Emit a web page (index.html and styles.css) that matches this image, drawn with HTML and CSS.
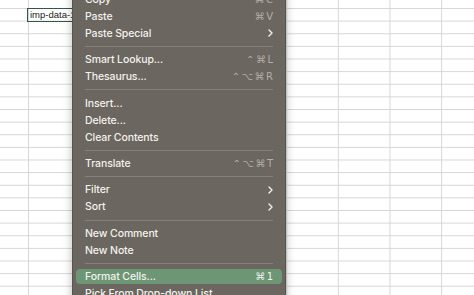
FILE: index.html
```html
<!DOCTYPE html>
<html>
<head>
<meta charset="utf-8">
<link rel="stylesheet" href="styles.css">
</head>
<body>
<div class="sheet">
  <div class="cell selected">imp-data-1</div>
</div>
<div class="menu">
  <div class="item"><span class="label">Copy</span><span class="key">⌘C</span></div>
  <div class="item"><span class="label">Paste</span><span class="key">⌘V</span></div>
  <div class="item"><span class="label">Paste Special</span><svg class="chev" viewBox="0 0 5 8" width="5" height="8"><polyline points="1,1 4,4 1,7"/></svg></div>
  <div class="sep"></div>
  <div class="item"><span class="label">Smart Lookup...</span><span class="key">⌃⌘L</span></div>
  <div class="item"><span class="label">Thesaurus...</span><span class="key">⌃⌥⌘R</span></div>
  <div class="sep"></div>
  <div class="item"><span class="label">Insert...</span></div>
  <div class="item"><span class="label">Delete...</span></div>
  <div class="item"><span class="label">Clear Contents</span></div>
  <div class="sep"></div>
  <div class="item"><span class="label">Translate</span><span class="key">⌃⌥⌘T</span></div>
  <div class="sep"></div>
  <div class="item"><span class="label">Filter</span><svg class="chev" viewBox="0 0 5 8" width="5" height="8"><polyline points="1,1 4,4 1,7"/></svg></div>
  <div class="item"><span class="label">Sort</span><svg class="chev" viewBox="0 0 5 8" width="5" height="8"><polyline points="1,1 4,4 1,7"/></svg></div>
  <div class="sep"></div>
  <div class="item"><span class="label">New Comment</span></div>
  <div class="item"><span class="label">New Note</span></div>
  <div class="sep"></div>
  <div class="item active"><span class="label">Format Cells...</span><span class="key">⌘1</span></div>
  <div class="item"><span class="label">Pick From Drop-down List</span></div>
</div>
</body>
</html>
```

FILE: styles.css
```css
html, body {
  margin: 0;
  padding: 0;
  background: #fff;
  overflow: hidden;
}
body {
  width: 474px;
  height: 295px;
  position: relative;
}
.sheet {
  height: 295px;
  display: grid;
  grid-template-columns: 28px repeat(9, 51.65px);
  grid-template-rows: 8px repeat(23, 12.64px);
  background-color: #fff;
  background-image:
    linear-gradient(to right, #d6d6d6 1px, transparent 1px),
    linear-gradient(to bottom, #d6d6d6 1px, transparent 1px);
  background-size: 51.65px 100%, 100% 12.64px;
  background-position: 28px 0, 0 8px;
}
.cell.selected {
  grid-row: 2;
  grid-column: 2;
  border: 1px solid #2f5a43;
  margin-left: -1px;
  height: 13.64px;
  box-sizing: border-box;
  padding-left: 2px;
  font-family: "Liberation Sans", Arial, sans-serif;
  font-size: 9.5px;
  line-height: 11.5px;
  color: #1a1a1a;
  white-space: nowrap;
  overflow: hidden;
}
.menu {
  position: absolute;
  left: 72px;
  top: -16px;
  width: 214px;
  box-sizing: border-box;
  padding: 5.5px 3px;
  display: flex;
  flex-direction: column;
  background: #6b665f;
  border: 1px solid #57534d;
  border-radius: 6px;
  box-shadow: 0 3px 10px rgba(0, 0, 0, 0.28);
  font-family: Inter, "Noto Sans", sans-serif;
  font-size: 10.5px;
  font-weight: 500;
  letter-spacing: -0.1px;
  color: #f3f1ee;
}
.item {
  height: 15.2px;
  margin: 1px 0;
  padding: 0 9px;
  display: flex;
  align-items: center;
  justify-content: space-between;
  border-radius: 4px;
  white-space: nowrap;
  flex: none;
}
.item.active {
  background: #6c9674;
}
.key {
  font-family: "DejaVu Sans", sans-serif;
  font-size: 10px;
  font-weight: normal;
  letter-spacing: 1.5px;
  margin-right: -1.5px;
  color: #b3aea7;
}
.item.active .key {
  color: #eef2ee;
}
.chev polyline {
  fill: none;
  stroke: #f3f1ee;
  stroke-width: 1.4;
  stroke-linecap: round;
  stroke-linejoin: round;
}
.sep {
  height: 1px;
  margin: 4px 9px;
  background: #85807a;
  flex: none;
}
```
